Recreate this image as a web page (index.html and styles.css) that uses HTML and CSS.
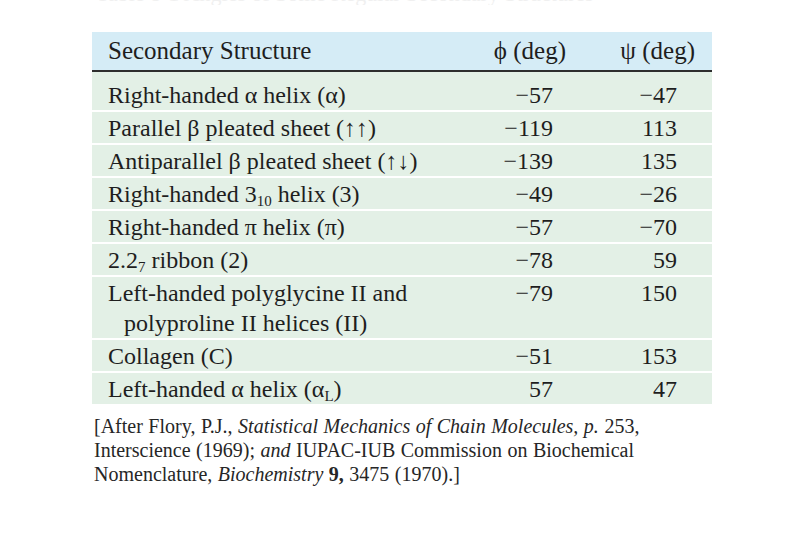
FILE: index.html
```html
<!DOCTYPE html>
<html>
<head>
<meta charset="utf-8">
<link rel="stylesheet" href="styles.css">
</head>
<body>
<div class="page">
  <div class="caption"><span>Table 8-1 Angles of Some Regular Secondary Structures</span></div>
  <table class="ss-table">
    <colgroup>
      <col class="w-name">
      <col class="w-phi">
      <col class="w-psi">
    </colgroup>
    <thead>
      <tr>
        <th class="c-name">Secondary Structure</th>
        <th class="c-phi">ϕ (deg)</th>
        <th class="c-psi">ψ (deg)</th>
      </tr>
    </thead>
    <tbody>
      <tr class="first"><td class="c-name">Right-handed α helix (α)</td><td class="c-phi">−57</td><td class="c-psi">−47</td></tr>
      <tr><td class="c-name">Parallel β pleated sheet (↑↑)</td><td class="c-phi">−119</td><td class="c-psi">113</td></tr>
      <tr><td class="c-name">Antiparallel β pleated sheet (↑↓)</td><td class="c-phi">−139</td><td class="c-psi">135</td></tr>
      <tr><td class="c-name">Right-handed 3<sub>10</sub> helix (3)</td><td class="c-phi">−49</td><td class="c-psi">−26</td></tr>
      <tr><td class="c-name">Right-handed π helix (π)</td><td class="c-phi">−57</td><td class="c-psi">−70</td></tr>
      <tr><td class="c-name">2.2<sub>7</sub> ribbon (2)</td><td class="c-phi">−78</td><td class="c-psi">59</td></tr>
      <tr><td class="c-name">Left-handed polyglycine II and<br><span class="indent">polyproline II helices (II)</span></td><td class="c-phi">−79</td><td class="c-psi">150</td></tr>
      <tr><td class="c-name">Collagen (C)</td><td class="c-phi">−51</td><td class="c-psi">153</td></tr>
      <tr><td class="c-name">Left-handed α helix (α<sub>L</sub>)</td><td class="c-phi">57</td><td class="c-psi">47</td></tr>
    </tbody>
  </table>
  <p class="source">[After Flory, P.J., <i>Statistical Mechanics of Chain Molecules, p.</i> 253,<br>Interscience (1969); <i>and</i> IUPAC-IUB Commission on Biochemical<br>Nomenclature, <i>Biochemistry</i> <b>9,</b> 3475 (1970).]</p>
</div>
</body>
</html>
```

FILE: styles.css
```css
html, body {
  margin: 0;
  padding: 0;
  background: #ffffff;
}

body {
  font-family: "Liberation Serif", "Times New Roman", serif;
  color: #1e1e1e;
}

.page {
  width: 786px;
  height: 556px;
  padding-left: 92px;
  box-sizing: border-box;
  overflow: hidden;
}

.caption {
  height: 5px;
  overflow: hidden;
  display: flex;
  align-items: flex-end;
  margin-bottom: 27px;
}

.caption span {
  font-size: 22px;
  line-height: 22px;
  color: #f0f0f0;
  white-space: nowrap;
  padding-left: 4px;
}

.ss-table {
  width: 620px;
  table-layout: fixed;
  border-collapse: collapse;
  font-size: 24px;
}

.w-name { width: 378px; }
.w-phi { width: 113px; }
.w-psi { width: 129px; }

.ss-table th {
  background: #d5ecf6;
  font-weight: normal;
  font-size: 25px;
  line-height: 30px;
  padding: 4px 0;
  border-bottom: 2px solid #2e2e2e;
  white-space: nowrap;
}

.ss-table td {
  background: #e3f0e6;
  line-height: 30px;
  padding: 1px 0 0;
  vertical-align: top;
  white-space: nowrap;
}

.ss-table tbody tr + tr td {
  border-top: 2px solid #ffffff;
}

.ss-table tbody tr.first td {
  padding-top: 8px;
}

.c-name {
  text-align: left;
  padding-left: 16px !important;
}

.c-phi,
.c-psi {
  text-align: right;
}

th.c-phi {
  padding-right: 17px !important;
}

th.c-psi {
  padding-right: 17px !important;
}

td.c-phi {
  padding-right: 30px !important;
}

td.c-psi {
  padding-right: 35px !important;
}

.indent {
  padding-left: 16px;
}

sub {
  font-size: 15px;
  line-height: 0;
  vertical-align: -4px;
}

.source {
  margin: 10px 0 0 2px;
  font-size: 20px;
  line-height: 24px;
  color: #262626;
  word-spacing: 0.5px;
}

.source b {
  font-weight: bold;
}
```
